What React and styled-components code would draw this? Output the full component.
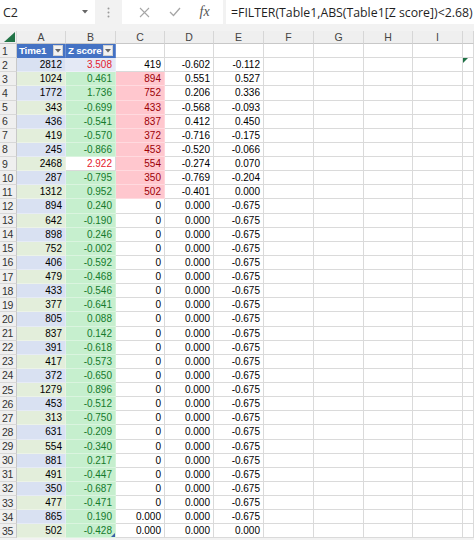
import React from 'react';
import styled, { createGlobalStyle } from 'styled-components';

const Global = createGlobalStyle`
  html, body { margin: 0; padding: 0; background: #fff; overflow: hidden; }
  body { font-family: "Liberation Sans", Arial, sans-serif; }
  * { box-sizing: border-box; }
`;

const Page = styled.div`
  width: 474px;
  height: 540px;
  overflow: hidden;
  background: #f2f2f2;
  display: flex;
  flex-direction: column;
`;

const FormulaBar = styled.div`
  display: flex;
  height: 24px;
  flex: none;
`;

const NameBox = styled.div`
  width: 95px;
  background: #fff;
  display: flex;
  align-items: center;
  justify-content: space-between;
  padding: 0 7px 0 3px;
  font-family: "Open Sans", sans-serif;
  font-size: 12.5px;
  color: #262626;
`;

const Grip = styled.div`
  width: 27px;
  display: flex;
  align-items: center;
  justify-content: center;
`;

const IconBox = styled.div`
  width: 101px;
  background: #fff;
  display: flex;
  align-items: center;
  justify-content: space-around;
  padding: 0 4px 0 8px;
`;

const Fx = styled.span`
  font-family: "Liberation Serif", serif;
  font-style: italic;
  font-size: 14px;
  color: #555;
`;

const FormulaInput = styled.div`
  flex: 1;
  margin-left: 3px;
  background: #fff;
  display: flex;
  align-items: center;
  padding-left: 5px;
  white-space: nowrap;
  overflow: hidden;
  font-family: "Open Sans", sans-serif;
  font-size: 12.3px;
  color: #1f1f1f;
`;

const Spacer = styled.div`
  height: 7px;
  flex: none;
`;

const Sheet = styled.div`
  display: grid;
  grid-template-columns: 17px 49px 50px 49px 49px 50px 50px 50px 49px 50px 1fr;
  grid-template-rows: 13px repeat(35, 14.14px);
  background: #fff;
  flex: none;
`;

const ColHead = styled.div`
  background: #efefef;
  border-right: 1px solid #d6d6d6;
  border-bottom: 1px solid #c8c8c8;
  display: flex;
  align-items: center;
  justify-content: center;
  font-size: 10.5px;
  color: #444;
`;

const Corner = styled(ColHead)`
  justify-content: flex-end;
  align-items: flex-end;
  padding: 0 1px 1px 0;
`;

const RowHead = styled.div`
  background: #efefef;
  border-right: 1px solid #c8c8c8;
  border-bottom: 1px solid #d8d8d8;
  display: flex;
  align-items: center;
  padding-left: 2px;
  font-size: 10.5px;
  letter-spacing: -0.3px;
  color: #333;
`;

const Cell = styled.div`
  position: relative;
  background: ${p => p.$bg || '#fff'};
  border-right: 1px solid ${p => (p.$bg ? 'rgba(255,255,255,0.25)' : '#dadada')};
  border-bottom: 1px solid ${p => (p.$bg ? 'rgba(255,255,255,0.35)' : '#dadada')};
  display: flex;
  align-items: center;
  justify-content: flex-end;
  padding-right: 3px;
  font-size: 10px;
  color: ${p => p.$fg || '#000'};
  white-space: nowrap;
  overflow: hidden;
`;

const FlagCell = styled(Cell)`
  align-items: flex-start;
  justify-content: flex-start;
  padding: 0;
`;

const TableHeader = styled.div`
  background: #4472c4;
  border-right: 1px solid #6c8fd0;
  border-bottom: 1px solid #4472c4;
  display: flex;
  align-items: center;
  justify-content: space-between;
  padding: 0 2px 0 2px;
  font-size: 9.8px;
  letter-spacing: -0.2px;
  font-weight: bold;
  color: #fff;
  white-space: nowrap;
`;

const FilterButton = styled.div`
  width: 10px;
  height: 11px;
  flex: none;
  background: #f2f2f2;
  border: 1px solid #d0d0d0;
  display: flex;
  align-items: center;
  justify-content: center;
`;

const ResizeHandle = styled.div`
  position: absolute;
  right: 0;
  bottom: 0;
  width: 0;
  height: 0;
  border-left: 4px solid transparent;
  border-bottom: 4px solid #3b5fa8;
`;

const COLORS = {
  band1: '#d9e1f2',
  band2: '#e3eedb',
  green: '#c6efce',
  greenText: '#157a2c',
  pink: '#ffc7ce',
  pinkText: '#9c0006',
  red: '#e5202e',
};

const A = [2812, 1024, 1772, 343, 436, 419, 245, 2468, 287, 1312, 894, 642, 898, 752, 406, 479, 433, 377, 805, 837, 391, 417, 372, 1279, 453, 313, 631, 554, 881, 491, 350, 477, 865, 502];
const B = ['3.508', '0.461', '1.736', '-0.699', '-0.541', '-0.570', '-0.866', '2.922', '-0.795', '0.952', '0.240', '-0.190', '0.246', '-0.002', '-0.592', '-0.468', '-0.546', '-0.641', '0.088', '0.142', '-0.618', '-0.573', '-0.650', '0.896', '-0.512', '-0.750', '-0.209', '-0.340', '0.217', '-0.447', '-0.687', '-0.471', '0.190', '-0.428'];
const C = ['419', '894', '752', '433', '837', '372', '453', '554', '350', '502'];
const D = ['-0.602', '0.551', '0.206', '-0.568', '0.412', '-0.716', '-0.520', '-0.274', '-0.769', '-0.401'];
const E = ['-0.112', '0.527', '0.336', '-0.093', '0.450', '-0.175', '-0.066', '0.070', '-0.204', '0.000'];

const LETTERS = ['A', 'B', 'C', 'D', 'E', 'F', 'G', 'H', 'I', ''];

const Caret = () => (
  <svg width="6" height="4" viewBox="0 0 6 4"><path d="M0 0 L6 0 L3 3.5 Z" fill="#666" /></svg>
);

function buildRow(i) {
  const r = i + 2;
  const outlier = i === 0 || i === 7;
  const aBg = i % 2 === 0 ? COLORS.band1 : COLORS.band2;
  const bBg = outlier ? (i % 2 === 0 ? '#e4e9f5' : undefined) : COLORS.green;
  const bFg = outlier ? COLORS.red : COLORS.greenText;
  let c, d, e, cBg, cFg;
  if (i < 10) {
    c = C[i]; d = D[i]; e = E[i];
    if (i > 0) { cBg = COLORS.pink; cFg = COLORS.pinkText; }
  } else if (r < 34) {
    c = '0'; d = '0.000'; e = '-0.675';
  } else if (r === 34) {
    c = '0.000'; d = '0.000'; e = '-0.675';
  } else {
    c = '0.000'; d = '0.000'; e = '0.000';
  }
  return (
    <React.Fragment key={r}>
      <RowHead>{r}</RowHead>
      <Cell $bg={aBg}>{A[i]}</Cell>
      <Cell $bg={bBg} $fg={bFg}>
        {B[i]}
        {r === 35 && <ResizeHandle />}
      </Cell>
      <Cell $bg={cBg} $fg={cFg}>{c}</Cell>
      <Cell>{d}</Cell>
      <Cell>{e}</Cell>
      <Cell />
      <Cell />
      <Cell />
      <Cell />
      {r === 2 ? (
        <FlagCell>
          <svg width="5" height="5" viewBox="0 0 5 5"><path d="M0 0 L5 0 L0 5 Z" fill="#1e7145" /></svg>
        </FlagCell>
      ) : (
        <Cell />
      )}
    </React.Fragment>
  );
}

export default function App() {
  const rows = [];
  for (let i = 0; i < 34; i++) rows.push(buildRow(i));
  return (
    <Page>
      <Global />
      <FormulaBar>
        <NameBox>
          <span>C2</span>
          <Caret />
        </NameBox>
        <Grip>
          <svg width="3" height="11" viewBox="0 0 3 11">
            <circle cx="1.5" cy="1.5" r="1" fill="#9a9a9a" />
            <circle cx="1.5" cy="5.5" r="1" fill="#9a9a9a" />
            <circle cx="1.5" cy="9.5" r="1" fill="#9a9a9a" />
          </svg>
        </Grip>
        <IconBox>
          <svg width="11" height="11" viewBox="0 0 11 11">
            <path d="M1 1 L10 10 M10 1 L1 10" stroke="#a6a6a6" strokeWidth="1.1" fill="none" />
          </svg>
          <svg width="12" height="10" viewBox="0 0 12 10">
            <path d="M1 5 L4.5 8.5 L11 1" stroke="#a6a6a6" strokeWidth="1.3" fill="none" />
          </svg>
          <Fx>fx</Fx>
        </IconBox>
        <FormulaInput>=FILTER(Table1,ABS(Table1[Z score])&lt;2.68)</FormulaInput>
      </FormulaBar>
      <Spacer />
      <Sheet>
        <Corner>
          <svg width="11" height="10" viewBox="0 0 11 10"><path d="M11 0 L11 10 L0 10 Z" fill="#217346" /></svg>
        </Corner>
        {LETTERS.map((l, k) => <ColHead key={k}>{l}</ColHead>)}
        <RowHead>1</RowHead>
        <TableHeader>
          <span>Time1</span>
          <FilterButton><Caret /></FilterButton>
        </TableHeader>
        <TableHeader>
          <span>Z score</span>
          <FilterButton><Caret /></FilterButton>
        </TableHeader>
        {Array.from({ length: 8 }).map((_, k) => <Cell key={k} />)}
        {rows}
      </Sheet>
    </Page>
  );
}
